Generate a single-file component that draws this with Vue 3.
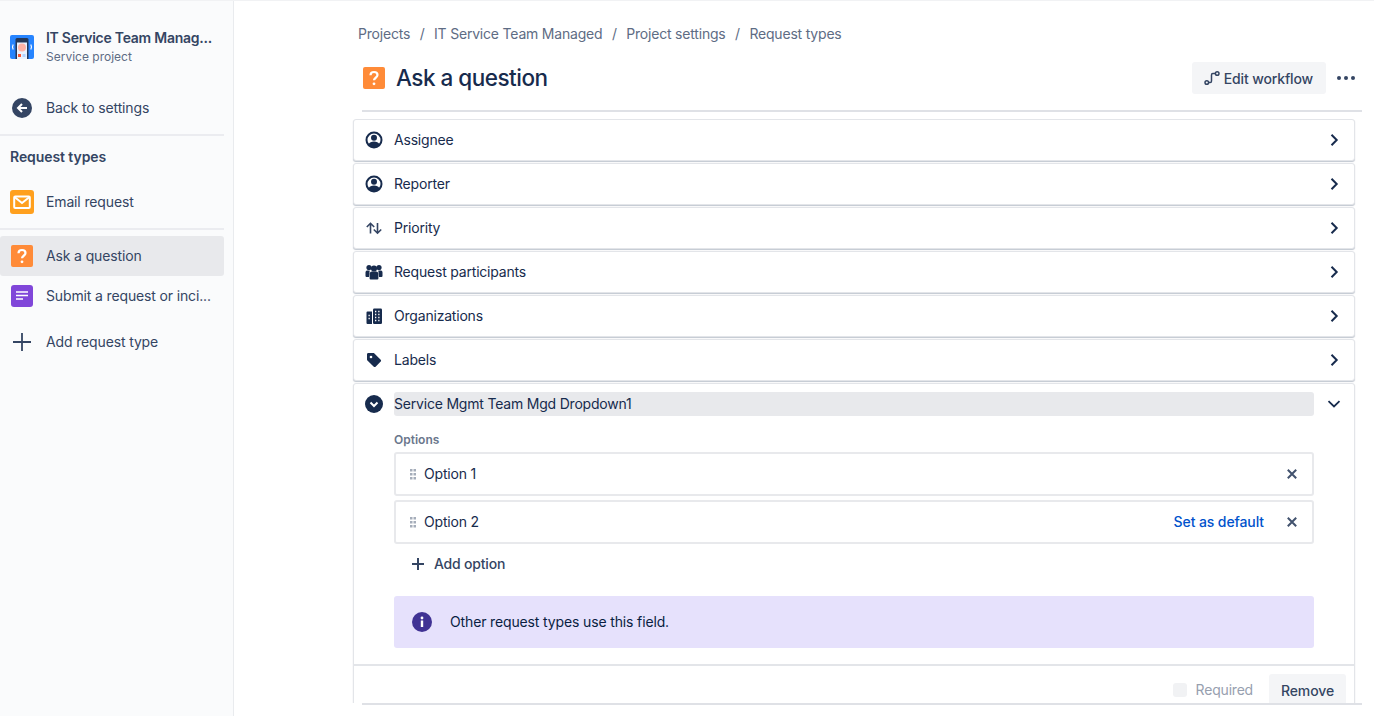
<template>
  <div class="page">
    <aside class="sidebar">
      <div class="project">
        <svg class="project-icon" width="24" height="24" viewBox="0 0 24 24">
          <rect width="24" height="24" rx="2" fill="#2684ff" />
          <path d="M5.500 4.500a1.500 1.500 0 0 1 1.500-1.500h10a1.500 1.500 0 0 1 1.500 1.500V24h-13z" fill="#253858" />
          <rect x="7" y="7.500" width="10" height="16.500" fill="#e9f2ff" />
          <circle cx="12" cy="12.500" r="4" fill="#ffb3a6" />
          <rect x="8" y="19" width="3" height="3" fill="#ff5630" />
          <rect x="12.500" y="19" width="3" height="3" fill="#b3d4ff" />
          <path d="M3.200 9.500q-1.400 2.500 0 5M20.800 9.500q1.400 2.500 0 5" fill="none" stroke="#fff" stroke-width="1.200" />
        </svg>
        <div class="project-text">
          <div class="project-name">IT Service Team Manag...</div>
          <div class="project-type">Service project</div>
        </div>
      </div>
      <div class="side-row back">
        <span class="side-icon">
          <svg width="20" height="20" viewBox="0 0 20 20">
            <circle cx="10" cy="10" r="10" fill="#344563" />
            <path d="M15 10H6.500M10 6l-4 4 4 4" fill="none" stroke="#fff" stroke-width="2" />
          </svg>
        </span>
        <span>Back to settings</span>
      </div>
      <div class="side-divider"></div>
      <div class="side-heading">Request types</div>
      <div class="side-row">
        <span class="side-icon">
          <svg width="24" height="24" viewBox="0 0 24 24">
            <rect width="24" height="24" rx="3" fill="#ffa01e" />
            <rect x="4.200" y="6.500" width="15.600" height="11.500" rx="1" fill="none" stroke="#fff" stroke-width="2" />
            <path d="M4.500 7l7.500 6 7.500-6" fill="none" stroke="#fff" stroke-width="2" />
          </svg>
        </span>
        <span>Email request</span>
      </div>
      <div class="side-divider email-divider"></div>
      <div class="side-row active">
        <span class="side-icon">
          <svg class="question" width="22" height="22" viewBox="0 0 22 22">
            <rect width="22" height="22" rx="2" fill="#ff8b38" />
            <path d="M7.500 8.200c0-2 1.500-3.200 3.500-3.200s3.500 1.200 3.500 3.100c0 2.700-3.500 2.600-3.500 5.200" fill="none" stroke="#fff" stroke-width="2.200" />
            <circle cx="11" cy="16.800" r="1.400" fill="#fff" />
          </svg>
        </span>
        <span>Ask a question</span>
      </div>
      <div class="side-row">
        <span class="side-icon">
          <svg class="question" width="22" height="22" viewBox="0 0 22 22">
            <rect width="22" height="22" rx="3" fill="#8046d9" />
            <path d="M5 7h12M5 10.500h12M5 14h7" stroke="#fff" stroke-width="1.500" />
          </svg>
        </span>
        <span>Submit a request or inci...</span>
      </div>
      <div class="side-row add">
        <span class="side-icon">
          <svg width="20" height="20" viewBox="0 0 20 20">
            <path d="M10 1v18M1 10h18" stroke="#344563" stroke-width="1.800" />
          </svg>
        </span>
        <span>Add request type</span>
      </div>
    </aside>

    <main class="main">
      <nav class="crumbs">
        <template v-for="(crumb, i) in crumbs" :key="crumb">
          <span v-if="i > 0" class="crumb-sep">/</span>
          <span>{{ crumb }}</span>
        </template>
      </nav>

      <header class="title-row">
        <svg width="22" height="22" viewBox="0 0 22 22">
          <rect width="22" height="22" rx="2" fill="#ff8b38" />
          <path d="M7.500 8.200c0-2 1.500-3.200 3.500-3.200s3.500 1.200 3.500 3.100c0 2.700-3.500 2.600-3.500 5.200" fill="none" stroke="#fff" stroke-width="2.200" />
          <circle cx="11" cy="16.800" r="1.400" fill="#fff" />
        </svg>
        <h1>Ask a question</h1>
        <button class="workflow" type="button">
          <svg width="16" height="16" viewBox="0 0 16 16" fill="none" stroke="#344563" stroke-width="1.500">
            <circle cx="2.800" cy="12.500" r="1.800" />
            <circle cx="13.200" cy="3.500" r="1.800" />
            <path d="M4.800 12.500h1.400c1 0 1.300-.7 1.300-1.600V5.100c0-.9.400-1.600 1.300-1.600h2.400" />
          </svg>
          Edit workflow
        </button>
        <div class="more"><i></i><i></i><i></i></div>
      </header>

      <div class="fields">
        <div v-for="field in fields" :key="field.name" class="field">
          <span class="field-icon">
            <svg v-if="field.icon === 'person'" width="18" height="18" viewBox="0 0 18 18">
              <circle cx="9" cy="9" r="7.500" fill="#fff" stroke="#172b4d" stroke-width="2" />
              <circle cx="9" cy="6.800" r="3" fill="#172b4d" />
              <path d="M3.500 13.500c1-2.200 3-3 5.500-3s4.500.8 5.500 3C13 15.500 11 16.500 9 16.500s-4-1-5.500-3z" fill="#172b4d" />
            </svg>
            <svg v-else-if="field.icon === 'priority'" width="18" height="18" viewBox="0 0 18 18" fill="none" stroke="#344563" stroke-width="1.600">
              <path d="M5.500 14.500V4.500M1.800 8l3.700-3.700L9.200 8" />
              <path d="M12.500 4v10M8.800 10.500l3.700 3.700 3.700-3.700" />
            </svg>
            <svg v-else-if="field.icon === 'people'" width="18" height="18" viewBox="0 0 18 18" fill="#172b4d">
              <circle cx="4" cy="4.500" r="2.600" />
              <circle cx="14" cy="4.500" r="2.600" />
              <circle cx="9" cy="5.500" r="3.100" />
              <path d="M.500 9.500C.500 8 1.500 7.500 2.500 7.500h2.200L4 14H1.500a1 1 0 0 1-1-1zM17.500 9.500c0-1.500-1-2-2-2h-2.200l.7 6.500h2.500a1 1 0 0 0 1-1z" />
              <path d="M4.600 11c0-1.500 1-2.400 2.200-2.400h4.400c1.200 0 2.200.9 2.200 2.400v4.500a1 1 0 0 1-1 1H5.600a1 1 0 0 1-1-1z" />
            </svg>
            <svg v-else-if="field.icon === 'org'" width="18" height="18" viewBox="0 0 18 18">
              <path d="M1.500 5.500a1 1 0 0 1 1-1h4.500V17H2.500a1 1 0 0 1-1-1z" fill="#172b4d" />
              <rect x="8" y="1.500" width="9" height="15.500" rx="1.200" fill="#172b4d" />
              <path d="M10 4.500h1.300M13.200 4.500h1.300M10 7.500h1.300M13.200 7.500h1.300M10 10.500h1.300M13.200 10.500h1.300M10 13.500h1.300M13.200 13.500h1.300M3.500 8.500h1.300M3.500 11.500h1.300" stroke="#fff" stroke-width="1.400" />
            </svg>
            <svg v-else-if="field.icon === 'label'" width="18" height="18" viewBox="0 0 18 18">
              <path d="M2 3.300C2 2.600 2.600 2 3.300 2h5.100c.4 0 .7.100 1 .4l6.300 6.400c.5.500.5 1.300 0 1.800l-5.100 5.100c-.5.500-1.300.5-1.800 0L2.400 9.400c-.3-.3-.4-.6-.4-1z" fill="#172b4d" />
              <circle cx="6" cy="6" r="1.300" fill="#fff" />
            </svg>
          </span>
          <span class="field-name">{{ field.name }}</span>
          <svg class="chevron" width="16" height="16" viewBox="0 0 16 16">
            <path d="M5.500 2.800L10.700 8l-5.200 5.200" fill="none" stroke="#172b4d" stroke-width="2" />
          </svg>
        </div>

        <div class="field-open">
          <div class="open-head">
            <span class="field-icon">
              <svg width="18" height="18" viewBox="0 0 18 18">
                <circle cx="9" cy="9" r="9" fill="#172b4d" />
                <path d="M5.500 7.500L9 11l3.500-3.500" fill="none" stroke="#fff" stroke-width="2" />
              </svg>
            </span>
            <span class="open-name">Service Mgmt Team Mgd Dropdown1</span>
            <svg class="chevron" width="16" height="16" viewBox="0 0 16 16">
              <path d="M2.500 5.200L8 10.500l5.500-5.300" fill="none" stroke="#172b4d" stroke-width="1.800" />
            </svg>
          </div>
          <div class="open-body">
            <div class="options-label">Options</div>
            <div v-for="option in options" :key="option.name" class="option">
              <svg class="grip" width="8" height="12" viewBox="0 0 8 12" fill="#a5adba">
                <rect v-for="dot in gripDots" :key="dot.id" :x="dot.x" :y="dot.y" width="2.500" height="2.500" />
              </svg>
              <span class="option-name">{{ option.name }}</span>
              <a v-if="option.canDefault" class="set-default">Set as default</a>
              <svg width="12" height="12" viewBox="0 0 12 12">
                <path d="M1.800 1.800l8.400 8.400M10.200 1.800l-8.400 8.400" stroke="#42526e" stroke-width="2" />
              </svg>
            </div>
            <div class="add-option">
              <svg width="14" height="14" viewBox="0 0 14 14">
                <path d="M7 1v12M1 7h12" stroke="#344563" stroke-width="2" />
              </svg>
              <span>Add option</span>
            </div>
            <div class="notice">
              <svg width="20" height="20" viewBox="0 0 20 20">
                <circle cx="10" cy="10" r="10" fill="#403294" />
                <rect x="8.800" y="8.500" width="2.400" height="6.500" fill="#fff" />
                <circle cx="10" cy="6" r="1.400" fill="#fff" />
              </svg>
              <span>Other request types use this field.</span>
            </div>
          </div>
          <div class="open-foot">
            <span class="checkbox"></span>
            <span class="required">Required</span>
            <button class="remove" type="button">Remove</button>
          </div>
        </div>
      </div>

      <div class="bottom-cover"><div class="bottom-line"></div></div>
    </main>
  </div>
</template>

<script setup>
const crumbs = ['Projects', 'IT Service Team Managed', 'Project settings', 'Request types']

const fields = [
  { name: 'Assignee', icon: 'person' },
  { name: 'Reporter', icon: 'person' },
  { name: 'Priority', icon: 'priority' },
  { name: 'Request participants', icon: 'people' },
  { name: 'Organizations', icon: 'org' },
  { name: 'Labels', icon: 'label' }
]

const options = [
  { name: 'Option 1', canDefault: false },
  { name: 'Option 2', canDefault: true }
]

const gripDots = [0, 1, 2, 3, 4, 5].map((id) => ({
  id,
  x: id % 2 ? 4.500 : 1,
  y: Math.floor(id / 2) * 4 + 1
}))
</script>

<style>
html, body { margin: 0; background: #fff; overflow: hidden; }
</style>

<style scoped>
* { box-sizing: border-box; font-family: Inter, 'Liberation Sans', sans-serif; }
.page { display: flex; height: 716px; overflow: hidden; color: #172b4d; font-size: 14px; line-height: 20px; border-top: 1px solid #f1f2f4; }
.sidebar { width: 234px; flex: none; padding: 0 9px 0 0; background: #fafbfc; border-right: 1px solid #e9ebee; color: #344563; letter-spacing: -.14px; }
.project { display: flex; align-items: center; height: 40px; margin-top: 26px; padding-left: 10px; }
.project-icon { flex: none; margin-right: 12px; }
.project-name { font-weight: 600; line-height: 20px; white-space: nowrap; letter-spacing: -.26px; }
.project-type { font-size: 12px; line-height: 18px; color: #5e6c84; letter-spacing: 0; }
.side-row { display: flex; align-items: center; height: 40px; padding-left: 10px; border-radius: 3px; white-space: nowrap; }
.side-row.back { margin-top: 21px; }
.side-row.active { background: #e8e9ec; }
.side-row.add { margin-top: 6px; }
.side-icon { display: flex; align-items: center; width: 36px; flex: none; }
.side-icon .question { margin-left: 1px; }
.back .side-icon svg { margin-left: 2px; }
.add .side-icon svg { margin-left: 2px; }
.side-divider { height: 2px; margin-top: 6px; background: #ebecf0; }
.email-divider { margin-bottom: 6px; }
.side-heading { margin: 11px 0 15px 10px; font-weight: 600; letter-spacing: -.08px; }
.main { position: relative; flex: 1; min-width: 0; padding-left: 119px; letter-spacing: -.2px; }
.crumbs { display: flex; gap: 9.500px; height: 20px; margin-top: 23px; padding-left: 5px; color: #5e6c84; }
.crumb-sep { color: #5e6c84; }
.title-row { display: flex; align-items: center; width: 1000px; height: 61px; margin: 7px 0 0 9px; padding-bottom: 5px; border-bottom: 2px solid #dfe1e6; }
.title-row > svg { margin: 0 11px 0 1px; }
.title-row h1 { flex: 1; margin: 0; font-size: 22.500px; line-height: 28px; font-weight: 500; letter-spacing: -.5px; }
.workflow { display: flex; align-items: center; gap: 4px; height: 32px; padding: 0 13px 0 12px; border: 0; border-radius: 3px; background: #f4f5f7; color: #344563; font-size: 14px; font-weight: 500; letter-spacing: -.14px; }
.more { display: flex; gap: 3px; margin: 0 7px 0 11px; }
.more i { width: 4px; height: 4px; border-radius: 50%; background: #344563; }
.fields { display: flex; flex-direction: column; gap: 2px; width: 1002px; margin-top: 7px; }
.field { display: flex; align-items: center; height: 42px; padding: 0 12px 0 11px; background: #fff; border: 1px solid #e3e5e9; border-radius: 3px; box-shadow: 0 1px 1px rgba(9, 30, 66, .25); }
.field-icon { display: flex; width: 29px; flex: none; }
.field-name { flex: 1; }
.field-open { background: #fff; border: 1px solid #e3e5e9; border-radius: 3px; box-shadow: 0 1px 1px rgba(9, 30, 66, .25); }
.open-head { display: flex; align-items: center; height: 40px; padding: 0 12px 0 11px; }
.open-name { flex: 1; height: 24px; margin-right: 12px; line-height: 24px; border-radius: 3px; background: #e8e9ec; }
.open-body { padding: 8px 40px 16px 40px; border-bottom: 2px solid #e3e5e9; }
.options-label { margin-bottom: 4px; font-size: 12px; line-height: 16px; font-weight: 600; color: #6b778c; letter-spacing: 0; }
.option { display: flex; align-items: center; height: 44px; margin-bottom: 4px; padding: 0 14px 0 13px; border: 2px solid #e8e9ec; border-radius: 3px; }
.option-name { flex: 1; }
.grip { margin-right: 7px; }
.set-default { margin-right: 22px; color: #0052cc; font-weight: 500; letter-spacing: -.1px; }
.add-option { display: flex; align-items: center; gap: 9px; height: 36px; margin-top: -2px; padding-left: 17px; color: #344563; font-weight: 500; }
.notice { display: flex; align-items: center; gap: 18px; height: 52px; margin-top: 14px; padding-left: 18px; border-radius: 3px; background: #e6e1fc; color: #091e42; letter-spacing: -.14px; }
.open-foot { display: flex; align-items: center; justify-content: flex-end; height: 48px; padding: 0 8px 0 0; }
.checkbox { width: 14px; height: 14px; margin-right: 9px; border-radius: 3px; background: #f1f2f4; }
.required { color: #97a0af; margin-right: 16px; }
.remove { width: 77px; height: 32px; padding: 0; border: 0; border-radius: 3px; background: #f4f5f7; color: #344563; font-size: 14px; font-weight: 500; letter-spacing: -.1px; }
.bottom-cover { position: absolute; top: 702px; left: 118px; right: 0; bottom: 0; padding-left: 10px; background: #fff; }
.bottom-line { width: 1000px; height: 2px; background: #dfe1e6; }
</style>
